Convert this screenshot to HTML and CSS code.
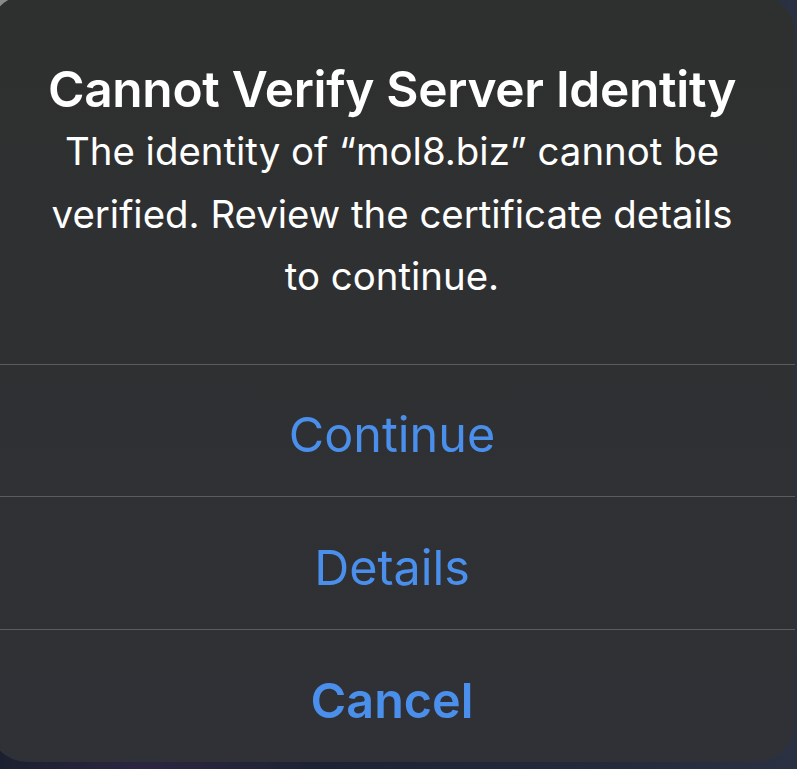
FILE: index.html
```html
<!DOCTYPE html>
<html lang="en">
<head>
<meta charset="utf-8">
<title>Cannot Verify Server Identity</title>
<link rel="stylesheet" href="styles.css">
</head>
<body>
<div class="alert">
  <div class="alert-header">
    <h1 class="alert-title">Cannot Verify Server Identity</h1>
    <p class="alert-message">The identity of “mol8.biz” cannot be verified. Review the certificate details to continue.</p>
  </div>
  <div class="alert-action">Continue</div>
  <div class="alert-action">Details</div>
  <div class="alert-action alert-action-cancel">Cancel</div>
</div>
</body>
</html>
```

FILE: styles.css
```css
html, body {
  margin: 0;
  padding: 0;
  width: 797px;
  height: 769px;
  overflow: hidden;
}

body {
  background:
    radial-gradient(circle at 2px 2px, #8a8a8c 0, #8a8a8c 7px, transparent 9px),
    linear-gradient(90deg, #1b2030 0%, #2c2540 18%, #1d2333 40%, #232a3a 75%, #2a3142 100%);
  font-family: Inter, "Noto Sans", "Liberation Sans", sans-serif;
  color: #ffffff;
}

.alert {
  width: 806px;
  height: 767px;
  margin: -5px 0 0 -11px;
  border-radius: 38px;
  overflow: hidden;
  background: linear-gradient(180deg, #2e302f 0%, #2f3032 45%, #303136 100%);
  display: flex;
  flex-direction: column;
}

.alert-header {
  padding: 64px 30px 0;
  height: 369px;
  box-sizing: border-box;
  text-align: center;
}

.alert-title {
  margin: 0;
  font-size: 49.6px;
  line-height: 60px;
  font-weight: 600;
  letter-spacing: -0.3px;
}

.alert-message {
  max-width: 700px;
  margin: 1px auto 0;
  font-size: 38.4px;
  line-height: 62.5px;
  font-weight: 400;
}

.alert-action {
  height: 133px;
  box-sizing: border-box;
  border-top: 1px solid #5b5c5f;
  padding-top: 9px;
  display: flex;
  align-items: center;
  justify-content: center;
  font-size: 48.5px;
  color: #4a8fec;
}

.alert-action-cancel {
  font-weight: 600;
}
```
